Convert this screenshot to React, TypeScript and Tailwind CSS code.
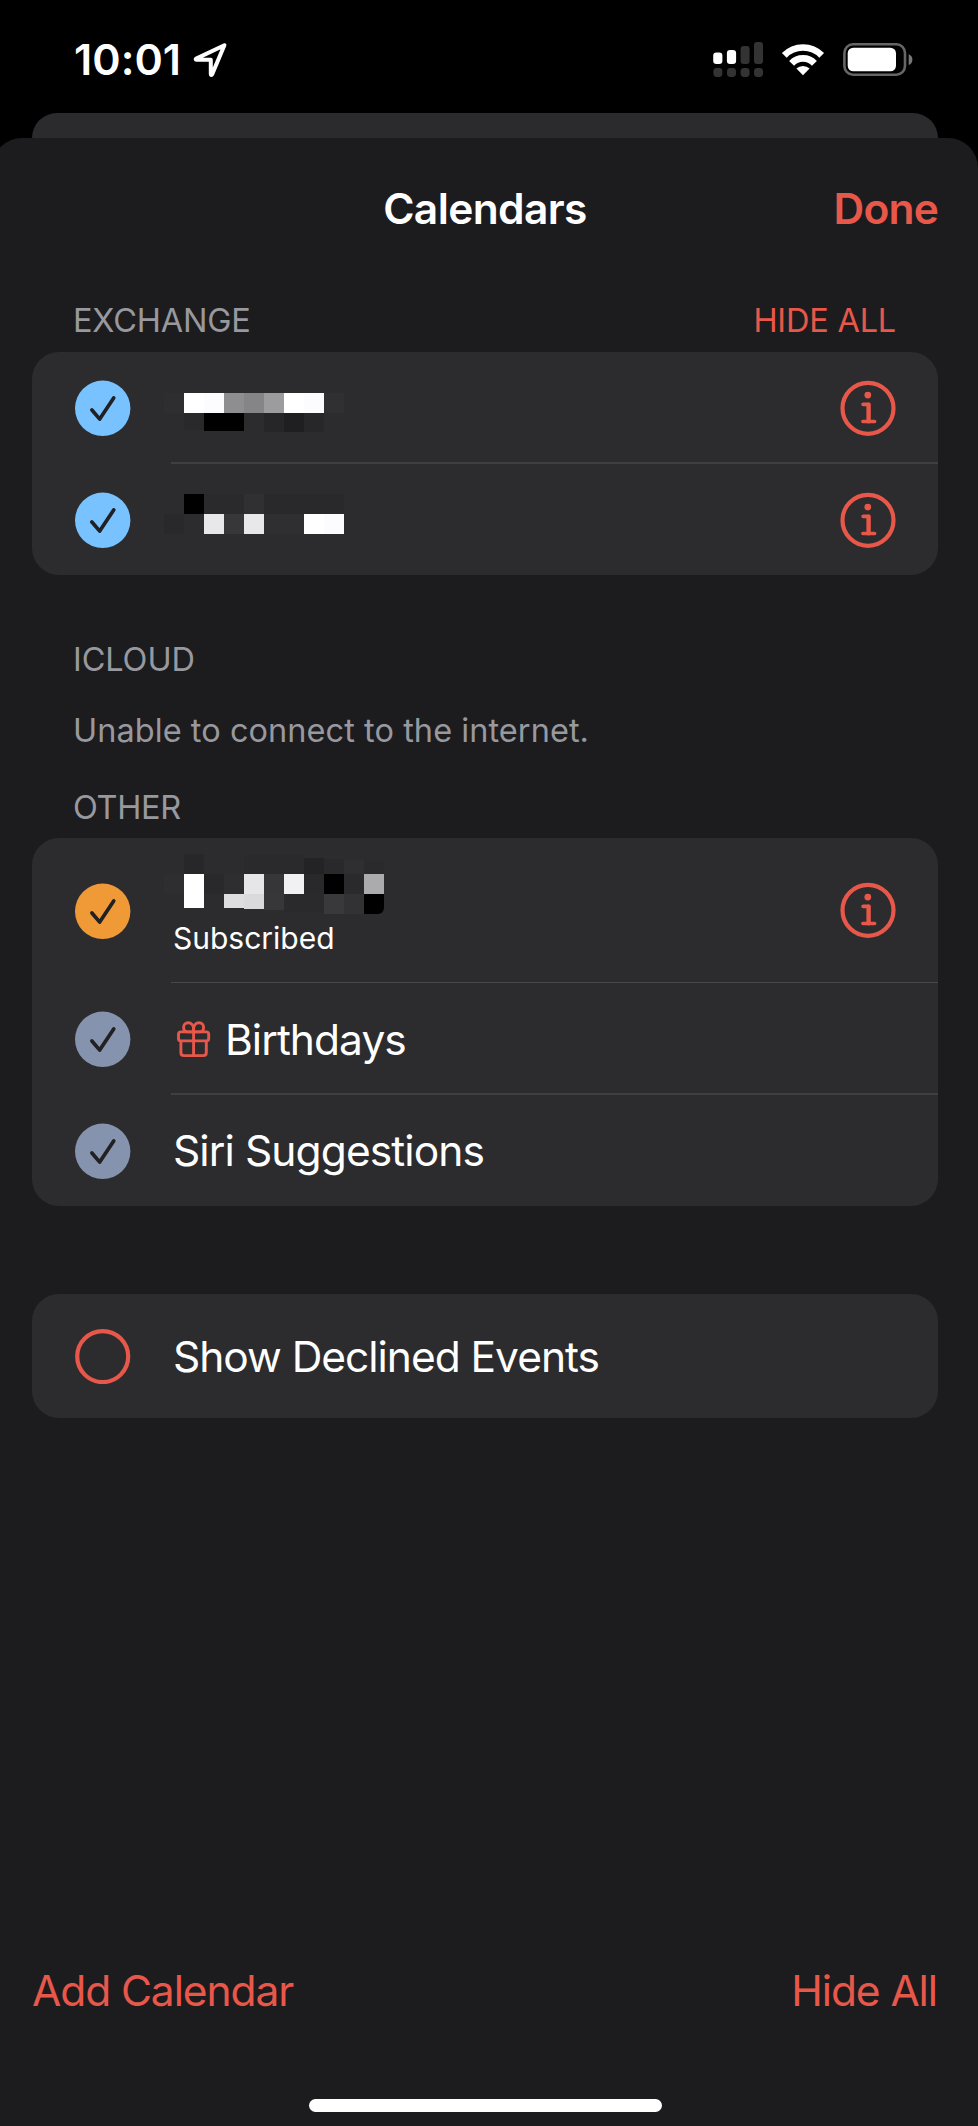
import type { ReactNode } from "react";

type Cell = [x: number, y: number, w: number, h: number, fill: string];

const exchangeFirst: Cell[] = [
  [0, 0, 20, 20, "#2e2e30"], [20, 0, 20, 20, "#ffffff"], [40, 0, 20, 20, "#fcfcff"],
  [60, 0, 20, 20, "#8e8e90"], [80, 0, 20, 20, "#858587"], [100, 0, 20, 20, "#9c9c9e"],
  [120, 0, 20, 20, "#ffffff"], [140, 0, 20, 20, "#fcfcff"], [160, 0, 20, 20, "#303032"],
  [20, 20, 20, 17, "#29292b"], [40, 20, 40, 18, "#000000"], [100, 20, 20, 19, "#262628"],
  [120, 20, 20, 19, "#1f1f21"], [140, 20, 20, 19, "#272729"],
];

const exchangeSecond: Cell[] = [
  [20, 0, 20, 20, "#000000"], [40, 0, 40, 20, "#2a2a2c"], [80, 0, 20, 20, "#303032"],
  [100, 0, 80, 20, "#29292b"], [0, 20, 20, 20, "#29292b"], [40, 20, 20, 20, "#e8e8eb"],
  [60, 20, 20, 20, "#373739"], [80, 20, 20, 20, "#e8e8eb"], [100, 20, 40, 20, "#2f2f31"],
  [140, 20, 20, 20, "#ffffff"], [160, 20, 20, 20, "#fcfcff"],
];

const subscribed: Cell[] = [
  [20, 0, 20, 20, "#272729"], [80, 1, 60, 19, "#2a2a2c"], [140, 4, 20, 16, "#232325"],
  [160, 5, 20, 15, "#29292b"], [180, 6, 20, 14, "#2f2f31"], [200, 7, 20, 13, "#2a2a2c"],
  [0, 20, 20, 20, "#2e2e30"], [20, 20, 20, 34, "#ffffff"], [40, 20, 20, 20, "#29292b"],
  [60, 20, 20, 20, "#2e2e30"], [80, 20, 20, 20, "#e6e6e9"], [100, 20, 20, 20, "#363638"],
  [120, 20, 20, 20, "#f1f1f4"], [140, 20, 20, 20, "#29292b"], [160, 20, 20, 20, "#000000"],
  [180, 20, 20, 20, "#2a2a2c"], [200, 20, 20, 20, "#ababad"],
  [60, 40, 20, 14, "#dedee1"], [80, 40, 20, 15, "#dadadc"], [100, 40, 20, 16, "#373739"],
  [120, 40, 40, 18, "#2a2a2c"], [160, 40, 20, 20, "#39393b"], [180, 40, 20, 20, "#323234"],
  [200, 40, 20, 20, "#000000"],
];

function Redacted({ cells, height }: { cells: Cell[]; height: number }) {
  return (
    <svg width="220" height={height} viewBox={`0 0 220 ${height}`} shapeRendering="crispEdges" aria-hidden="true">
      {cells.map(([x, y, w, h, fill]) => (
        <rect key={`${x}-${y}`} x={x} y={y} width={w} height={h} fill={fill} />
      ))}
    </svg>
  );
}

function LocationArrow() {
  return (
    <svg width="36" height="36" viewBox="0 0 36 36" fill="none" stroke="#fff" strokeWidth="4" strokeLinejoin="round">
      <path d="M32.4 3.2 L4.2 16.6 C3.4 17 3.6 17.8 4.4 17.8 H18.8 V32 C18.8 33.2 19.6 33.4 20.1 32.4 Z" />
    </svg>
  );
}

function Signal() {
  return (
    <svg width="50" height="36" viewBox="0 0 50 36">
      <g fill="#fff">
        <rect x="0.2" y="11.5" width="9.2" height="11.5" rx="3.2" />
        <rect x="13.9" y="9" width="9.2" height="14" rx="3.2" />
      </g>
      <g fill="#333">
        <rect x="27.6" y="5" width="9" height="18" rx="3" />
        <rect x="41" y="1" width="9" height="22" rx="3" />
        <rect x="0.4" y="27" width="9" height="9" rx="3.4" />
        <rect x="14" y="27" width="9" height="9" rx="3.4" />
        <rect x="27.6" y="27" width="9" height="9" rx="3.4" />
        <rect x="41" y="27" width="9" height="9" rx="3.4" />
      </g>
    </svg>
  );
}

function Wifi() {
  return (
    <svg width="44" height="34" viewBox="0 0 44 34" fill="none" stroke="#fff">
      <path d="M3.3 12.4 A26.2 26.2 0 0 1 40.7 12.4" strokeWidth="6.6" />
      <path d="M10.6 20.3 A15.7 15.7 0 0 1 33.4 20.3" strokeWidth="6.8" />
      <path d="M22 32.2 L15.4 25.6 A9.6 9.6 0 0 1 28.6 25.6 Z" fill="#fff" stroke="none" />
    </svg>
  );
}

function Battery() {
  return (
    <svg width="70" height="33" viewBox="0 0 70 33">
      <rect x="1.4" y="1.3" width="60.6" height="30.4" rx="8.6" fill="none" stroke="#666" strokeWidth="2.6" />
      <rect x="4.7" y="4.7" width="48.3" height="23.6" rx="5.6" fill="#fff" />
      <path d="M65.7 11.3 A5.8 5.8 0 0 1 65.7 22.1 Z" fill="#777" />
    </svg>
  );
}

function Check({ className }: { className: string }) {
  return (
    <svg width="56" height="56" viewBox="-28 -28.3 56 56" className={className}>
      <circle cx="-0.3" r="27.7" fill="currentColor" />
      <path d="M-11.1 1.7 L-3.3 10.8 L10.7 -10.4" fill="none" stroke="#212123" strokeWidth="3.7" strokeLinecap="round" strokeLinejoin="round" />
    </svg>
  );
}

function EmptyCircle() {
  return (
    <svg width="56" height="56" viewBox="-28 -28.6 56 56">
      <circle cx="-0.3" r="25.5" fill="none" stroke="#e8584a" strokeWidth="4.2" />
    </svg>
  );
}

function InfoButton() {
  return (
    <button type="button" aria-label="Calendar info" className="mr-[42px] shrink-0">
      <svg width="56" height="56" viewBox="-28 -28.3 56 56" fill="none" stroke="#e8584a" strokeLinecap="round" strokeLinejoin="round">
        <circle r="25.5" strokeWidth="4.2" />
        <circle cx="-0.2" cy="-13.2" r="3.4" fill="#e8584a" stroke="none" />
        <path d="M-4.9 -3.9 H0.7 M-5.1 13.2 H6.6" strokeWidth="3.6" />
        <path d="M0.6 -3.6 V13" strokeWidth="4.4" />
      </svg>
    </button>
  );
}

function Gift() {
  return (
    <svg width="34" height="37" viewBox="0 0 34 37" fill="none" stroke="#e8584a" strokeWidth="2.9" strokeLinejoin="round">
      <rect x="1.5" y="10.9" width="30.2" height="9" rx="2.4" />
      <path d="M3.9 19.9 V31.4 C3.9 33.4 5 34.6 7 34.6 H26.2 C28.2 34.6 29.3 33.4 29.3 31.4 V19.9" />
      <path d="M16.6 10.9 V34.6" />
      <path d="M16.6 10.9 H10.6 C8 10.9 6.6 8.8 6.6 6.4 C6.6 3.8 8.6 1.8 11.1 1.8 C14.2 1.8 16.6 4.4 16.6 8 Z" />
      <path d="M16.6 10.9 H22.6 C25.2 10.9 26.6 8.8 26.6 6.4 C26.6 3.8 24.6 1.8 22.1 1.8 C19 1.8 16.6 4.4 16.6 8 Z" />
    </svg>
  );
}

function Row({
  icon,
  height,
  divider,
  info,
  children,
}: {
  icon: ReactNode;
  height: string;
  divider?: string;
  info?: boolean;
  children: ReactNode;
}) {
  return (
    <li className={`flex ${height}`}>
      <div className="flex w-[139px] shrink-0 items-center pl-[43px]">{icon}</div>
      <div className={`flex min-w-0 flex-1 items-center justify-between ${divider ?? ""}`}>
        {children}
        {info && <InfoButton />}
      </div>
    </li>
  );
}

export default function App() {
  return (
    <div className="h-[2126px] w-[978px] overflow-hidden bg-black font-['Inter',sans-serif] text-white">
      <div className="-ml-2 flex h-full w-[986px] flex-col">
        <header className="flex h-[113px] shrink-0 justify-between pr-[65px] pl-[82px]">
          <div className="flex items-start gap-3 pt-[42px]">
            <span className="w-[106px] text-[43px] leading-[34px] font-semibold tracking-[0.05px] whitespace-nowrap">10:01</span>
            <LocationArrow />
          </div>
          <div className="flex items-start pt-[41px]">
            <Signal />
            <span className="ml-[18px] pt-[2px]"><Wifi /></span>
            <span className="ml-[18px] pt-[2px]"><Battery /></span>
          </div>
        </header>

        <div className="mx-10 h-[25px] shrink-0 rounded-t-[25px] bg-[#2b2b2d]" />

        <main className="flex min-h-0 flex-1 flex-col rounded-t-[30px] bg-[#1c1c1e] px-10">
          <div className="grid h-[144px] shrink-0 grid-cols-3 items-center pb-px">
            <span />
            <h1 className="text-center text-[42.5px] leading-none font-semibold tracking-[-0.6px]">Calendars</h1>
            <button type="button" className="text-right text-[42.5px] leading-none font-semibold tracking-[-0.8px] text-[#e8584a]">Done</button>
          </div>

          <div className="flex h-[70px] shrink-0 items-end justify-between pr-[42px] pb-[15px] pl-[41px] text-[32.5px] leading-[32px] tracking-[-0.2px]">
            <h2 className="text-[#98989f]">EXCHANGE</h2>
            <button type="button" className="text-[#e8584a]">HIDE ALL</button>
          </div>
          <ul className="shrink-0 overflow-hidden rounded-[27px] bg-[#2c2c2e]">
            <Row icon={<Check className="text-[#78c2ff]" />} height="h-[112px]" divider="border-b-2 border-[#3f3f42] pt-[2px]" info>
              <div className="-ml-[7px] pt-[10px]"><Redacted cells={exchangeFirst} height={40} /></div>
            </Row>
            <Row icon={<Check className="text-[#78c2ff]" />} height="h-[111px]" info>
              <div className="-ml-[7px] pb-[11px]"><Redacted cells={exchangeSecond} height={40} /></div>
            </Row>
          </ul>

          <h2 className="mt-[69px] shrink-0 pl-[41px] text-[32.5px] leading-[32px] tracking-[-0.1px] text-[#98989f]">ICLOUD</h2>
          <p className="mt-[39px] shrink-0 pl-[41px] text-[32.5px] leading-[32px] tracking-[0.05px] text-[#98989f]">Unable to connect to the internet.</p>
          <h2 className="mt-[45px] mb-[14px] shrink-0 pl-[41px] text-[32.5px] leading-[32px] tracking-[-0.3px] text-[#98989f]">OTHER</h2>

          <ul className="shrink-0 overflow-hidden rounded-[27px] bg-[#2c2c2e]">
            <Row icon={<Check className="text-[#f09a37]" />} height="h-[145px]" divider="border-b border-[#48484b]" info>
              <div className="flex h-full flex-col pt-[16px]">
                <div className="-ml-[7px] h-[60px] w-[220px] overflow-hidden rounded-br-[6px]"><Redacted cells={subscribed} height={60} /></div>
                <span className="mt-[7px] pl-[2px] text-[30px] leading-[34px]">Subscribed</span>
              </div>
            </Row>
            <Row icon={<Check className="text-[#8593ae]" />} height="h-[112px]" divider="border-b-2 border-[#3f3f42] pt-[2px]">
              <div className="flex items-center pl-[6px]">
                <Gift />
                <span className="ml-[14px] pt-[2px] text-[42.5px] leading-[50px] tracking-[-0.95px]">Birthdays</span>
              </div>
            </Row>
            <Row icon={<Check className="text-[#8593ae]" />} height="h-[111px]">
              <span className="pt-px pl-[2px] text-[42.5px] leading-[50px] tracking-[-0.9px]">Siri Suggestions</span>
            </Row>
          </ul>

          <ul className="mt-[88px] shrink-0 rounded-[27px] bg-[#2c2c2e]">
            <Row icon={<EmptyCircle />} height="h-[124px]">
              <span className="pt-[2px] pl-[2px] text-[42.5px] leading-[50px] tracking-[-1.03px]">Show Declined Events</span>
            </Row>
          </ul>

          <footer className="mt-auto flex shrink-0 flex-col">
            <div className="flex justify-between pr-px text-[42.5px] leading-[50px] tracking-[-1.1px] text-[#e8584a]">
              <button type="button">Add Calendar</button>
              <button type="button">Hide All</button>
            </div>
            <div className="mx-auto mt-[83px] mb-[14px] h-[13px] w-[353px] rounded-full bg-white" />
          </footer>
        </main>
      </div>
    </div>
  );
}
